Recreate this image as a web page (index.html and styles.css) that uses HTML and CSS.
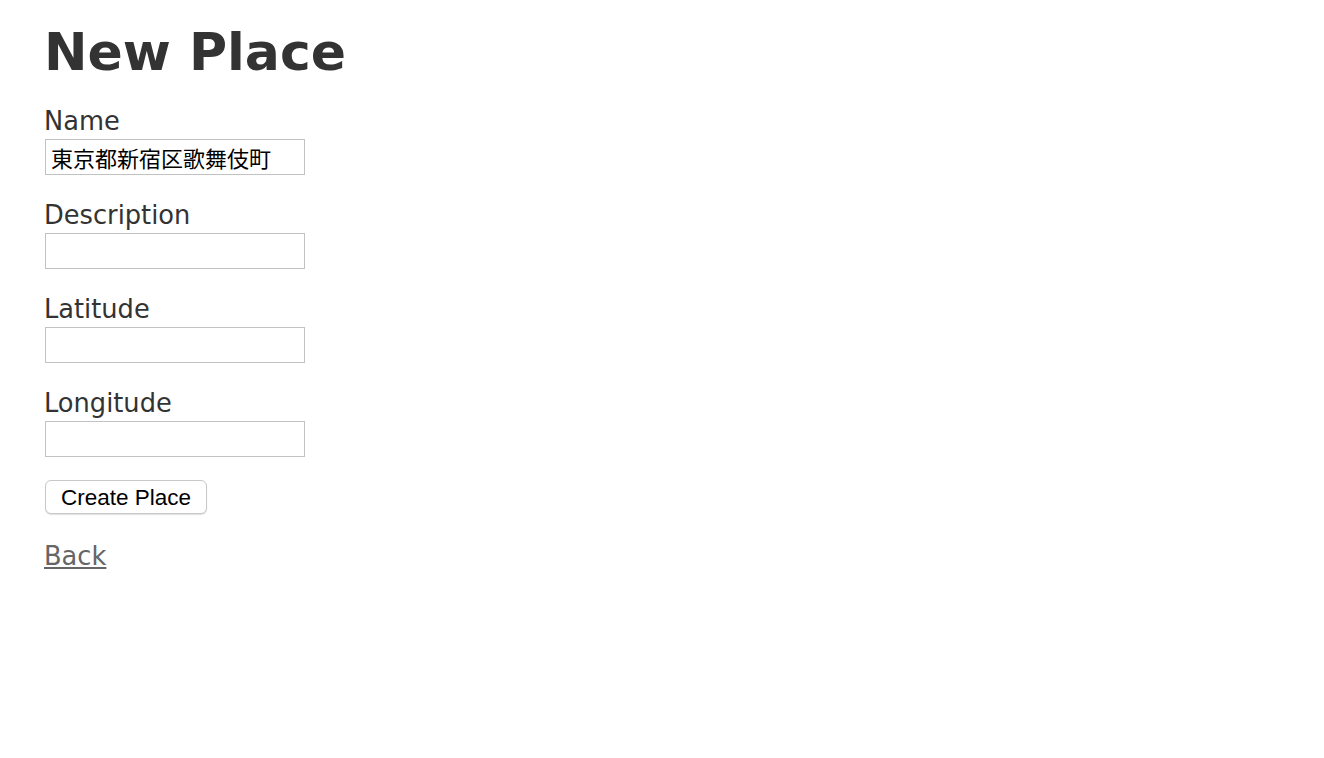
FILE: index.html
```html
<!DOCTYPE html>
<html lang="ja">
<head>
<meta charset="utf-8">
<title>New Place</title>
<link rel="stylesheet" href="styles.css">
</head>
<body>
<main class="page">
  <h1 class="title">New Place</h1>
  <form class="form">
    <div class="field">
      <label class="label" for="name">Name</label>
      <input class="input" id="name" type="text" value="東京都新宿区歌舞伎町">
    </div>
    <div class="field">
      <label class="label" for="desc">Description</label>
      <input class="input" id="desc" type="text">
    </div>
    <div class="field">
      <label class="label" for="lat">Latitude</label>
      <input class="input" id="lat" type="text">
    </div>
    <div class="field">
      <label class="label" for="lng">Longitude</label>
      <input class="input" id="lng" type="text">
    </div>
    <div class="actions">
      <button class="button" type="button">Create Place</button>
    </div>
  </form>
  <a class="back" href="#">Back</a>
</main>
</body>
</html>
```

FILE: styles.css
```css
html, body {
  margin: 0;
  padding: 0;
  background: #fff;
}
.page {
  padding: 22px 0 0 44px;
  color: #333;
  font-family: "DejaVu Sans", Verdana, sans-serif;
  font-size: 25.7px;
  line-height: 30px;
}
.title {
  margin: 0 0 24px 0;
  font-size: 52px;
  line-height: 60px;
  font-weight: bold;
  color: #333;
}
.form {
  margin: 0;
  display: flex;
  flex-direction: column;
}
.field {
  display: flex;
  flex-direction: column;
  align-items: flex-start;
  margin-bottom: 25px;
}
.label {
  display: block;
  margin-bottom: 3px;
}
.input {
  box-sizing: border-box;
  width: 260px;
  height: 36px;
  margin: 0 0 0 1px;
  padding: 0 5px;
  border: 1px solid #c2c2c2;
  border-radius: 0;
  background: #fff;
  color: #000;
  font-family: "Liberation Sans", "Noto Sans CJK JP", sans-serif;
  font-size: 22px;
  outline: none;
}
.actions {
  margin-top: -2px;
  display: flex;
}
.button {
  box-sizing: border-box;
  height: 34px;
  margin-left: 1px;
  padding: 1px 15px 0;
  border: 1px solid #c8c8c8;
  border-radius: 6px;
  background: #fff;
  box-shadow: 0 1px 1px rgba(0, 0, 0, 0.12);
  color: #000;
  font-family: "Liberation Sans", Arial, sans-serif;
  font-size: 22.5px;
  line-height: 32px;
}
.back {
  display: inline-block;
  margin-top: 27px;
  color: #666;
  text-decoration: underline;
}
```
